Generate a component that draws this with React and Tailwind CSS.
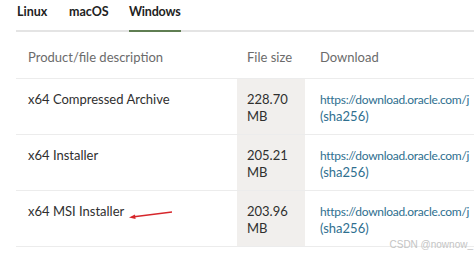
import React from 'react';

const rows = [
  { name: 'x64 Compressed Archive', size: '228.70', arrow: false },
  { name: 'x64 Installer', size: '205.21', arrow: false },
  { name: 'x64 MSI Installer', size: '203.96', arrow: true },
];

const App = () => {
  return (
    <div className="w-[474px] h-[253px] bg-white overflow-hidden relative font-['Lato',sans-serif]">
      {/* Tabs */}
      <div className="ml-[16px] border-b-2 border-[#e4e4e4] flex text-[12.5px] font-bold text-[#222] h-[32px]">
        <div className="pl-[1px] pt-[3px] w-[53px]">Linux</div>
        <div className="pt-[3px] w-[60px]">macOS</div>
        <div className="pt-[3px] relative tracking-[-0.2px]">
          Windows
          <div className="absolute left-0 right-0 bottom-[-2px] h-[2px] bg-[#5f7e52]" />
        </div>
      </div>

      {/* Table */}
      <div className="ml-[16px] text-[13px] leading-[17px]">
        <div className="flex h-[47px] items-center pt-[5px] text-[#6b6b6b] border-b border-[#ececec]">
          <div className="w-[221px] pl-[12px]">Product/file description</div>
          <div className="w-[68px] pl-[10px]">File size</div>
          <div className="pl-[15px] flex-1">Download</div>
        </div>
        {rows.map((r) => (
          <div key={r.size} className="flex h-[56px] border-b border-[#ececec] text-[#2f2f2f]">
            <div className="w-[221px] pl-[12px] pt-[12px] relative">
              {r.name}
              {r.arrow && (
                <svg className="absolute left-[112px] top-[19px]" width="46" height="10" viewBox="0 0 46 10">
                  <line x1="44" y1="2" x2="4" y2="7" stroke="#d6262b" strokeWidth="1.4" />
                  <path d="M1 7.4 L7 4.6 L7.6 9 Z" fill="#d6262b" />
                </svg>
              )}
            </div>
            <div className="w-[68px] pl-[10px] pt-[12px] bg-[#f1efed]">
              <div>{r.size}</div>
              <div>MB</div>
            </div>
            <div className="flex-1 pl-[15px] pt-[12px] whitespace-nowrap overflow-hidden text-[#2f6f8f]">
              <div className="text-[12px] tracking-[-0.3px]">https://download.oracle.com/j</div>
              <div>(sha256)</div>
            </div>
          </div>
        ))}
      </div>

      <div className="absolute right-[1px] bottom-[1px] text-[10px] text-[#c4c4c4] font-['Liberation_Sans',sans-serif]">
        CSDN @nownow_
      </div>
    </div>
  );
};

export default App;
